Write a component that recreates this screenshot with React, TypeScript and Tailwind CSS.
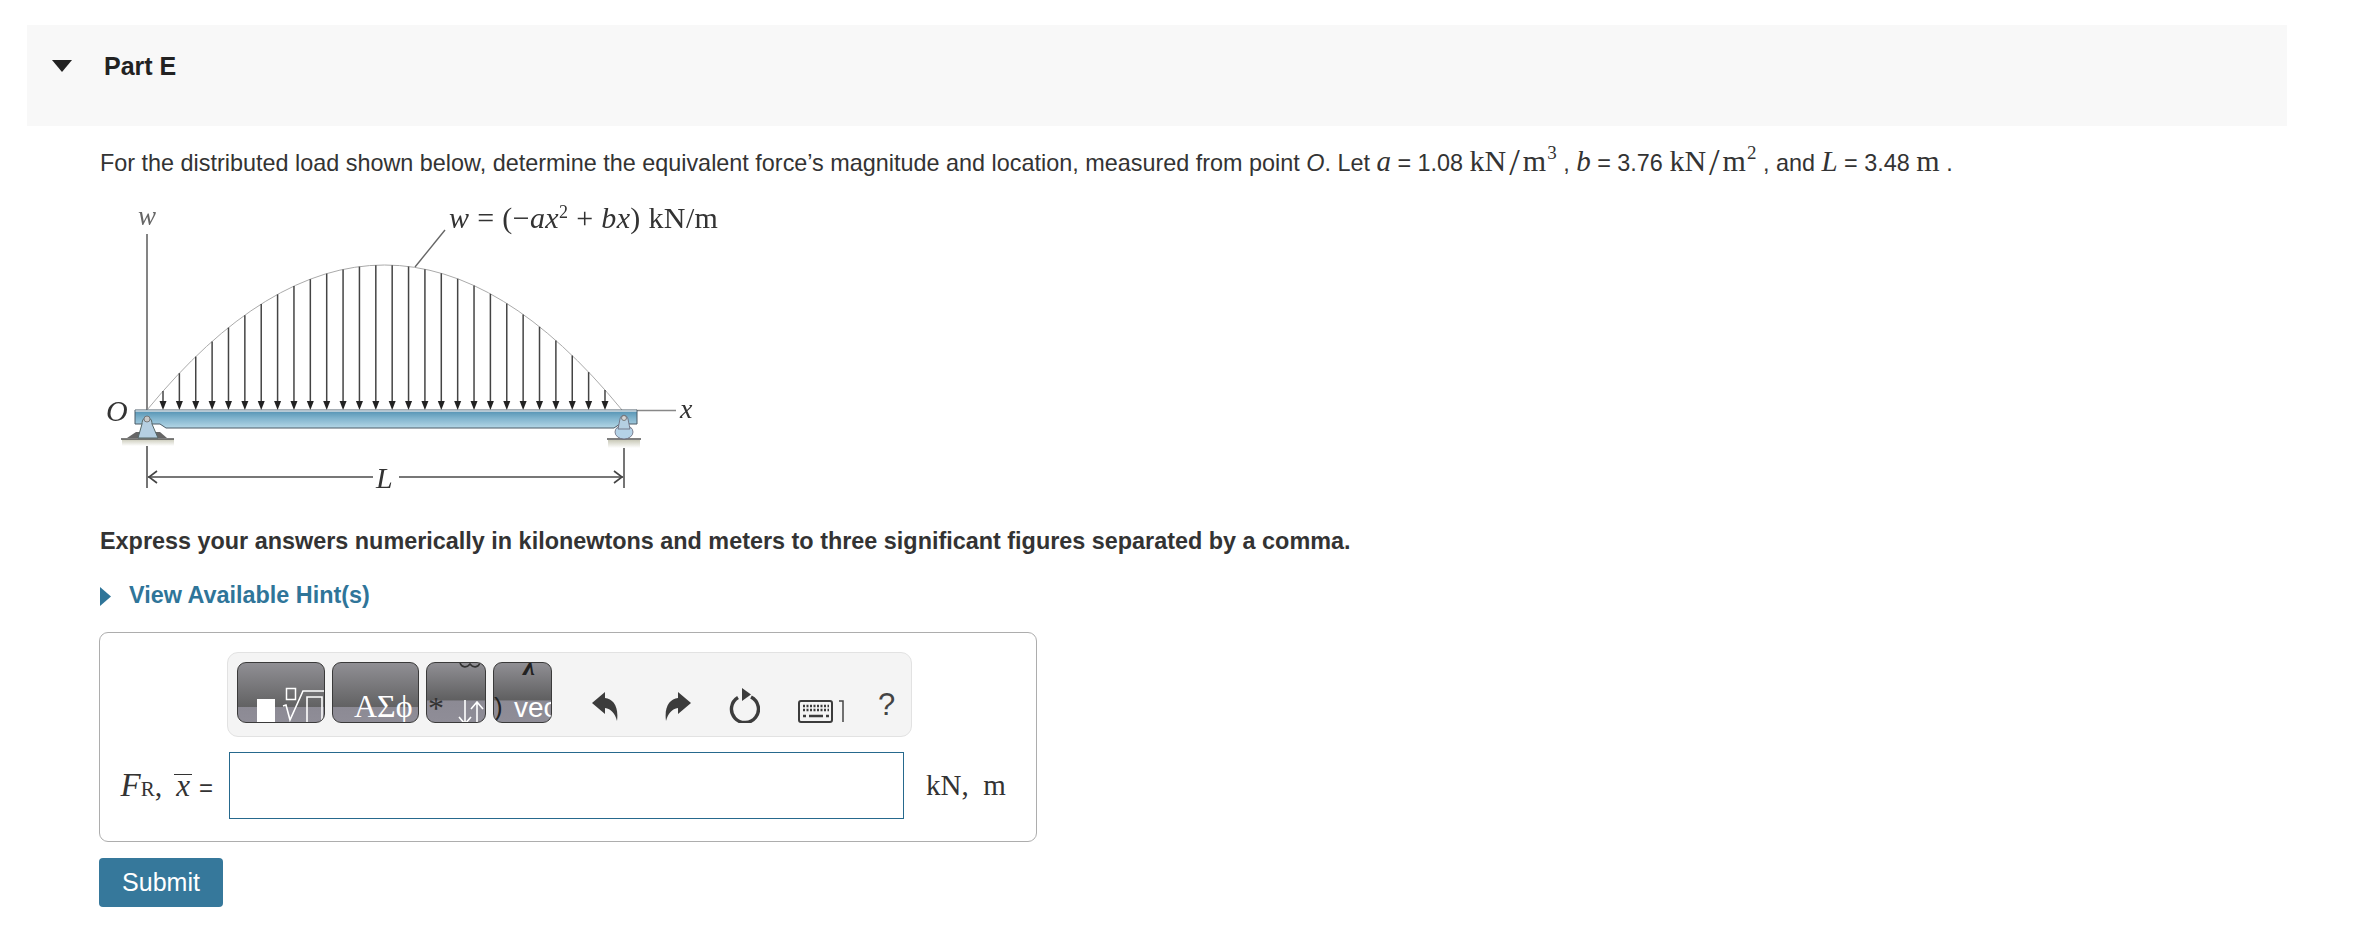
import React from "react";

const serif = "font-['Liberation_Serif',serif]";

// x positions of the load arrows, top of each one sits on the parabola
const arrows = Array.from({ length: 28 }, (_, i) => {
  const x = 163 + i * 16.37;
  const t = (x - 384.5) / 237.5;
  return { x, top: 409 - 145 * (1 - t * t) };
});

const BeamFigure = () => (
  <svg viewBox="100 190 620 310" className="block w-[620px] h-[310px] blur-[0.35px]">
    <defs>
      <linearGradient id="beam" x1="0" y1="0" x2="0" y2="1">
        <stop offset="0" stopColor="#4f8fb0" />
        <stop offset="0.45" stopColor="#7fb3cd" />
        <stop offset="1" stopColor="#b4d6e6" />
      </linearGradient>
      <linearGradient id="shade" x1="0" y1="0" x2="0" y2="1">
        <stop offset="0" stopColor="#c9c9b8" />
        <stop offset="1" stopColor="#ffffff" />
      </linearGradient>
    </defs>

    {/* axes */}
    <path d="M147 233V412" stroke="#777" strokeWidth="1.8" />
    <path d="M147 441V487" stroke="#666" strokeWidth="1.8" />
    <path d="M624 441V487" stroke="#666" strokeWidth="1.8" />
    <path d="M636 409.5H676" stroke="#888" strokeWidth="1.6" />

    {/* load curve */}
    <path d="M147 409Q384.500 119 622 409" fill="none" stroke="#aaa" strokeWidth="1" />
    <path d="M415 266L445 229" stroke="#666" strokeWidth="1.4" />

    {arrows.map((a) => (
      <g key={a.x}>
        <path d={`M${a.x} ${a.top}V402`} stroke="#444" strokeWidth="1.5" />
        <path d={`M${a.x - 3.5} 400H${a.x + 3.5}L${a.x} 409Z`} fill="#222" />
      </g>
    ))}

    {/* beam */}
    <path d="M135 409H637V423H620L614 427H166L160 423H135Z" fill="url(#beam)" stroke="#4a5b66" strokeWidth="1" />
    <path d="M135.500 410H636.500" stroke="#d5dde2" strokeWidth="1.6" />

    {/* left support */}
    <rect x="122" y="438" width="52" height="7" fill="url(#shade)" />
    <path d="M121 438H174" stroke="#555" strokeWidth="1.4" />
    <path d="M127 437L136 431H160L167 437Z" fill="#666" />
    <path d="M138 437L142 423C142 414 152 414 152 423L158 437Z" fill="#b5cfe2" stroke="#566" strokeWidth="1" />
    <circle cx="147" cy="418" r="3" fill="#c8c8c8" stroke="#666" strokeWidth="0.8" />

    {/* right support */}
    <rect x="608" y="439" width="32" height="8" fill="url(#shade)" />
    <path d="M607 438H641" stroke="#555" strokeWidth="1.4" />
    <ellipse cx="624" cy="431" rx="9" ry="7" fill="#b5d3e8" stroke="#667" strokeWidth="0.8" />
    <path d="M618 428L620 418C621 413 627 413 628 418L630 428Z" fill="#b5cfe2" stroke="#667" strokeWidth="0.8" />
    <circle cx="624" cy="417" r="2.500" fill="#d5d5d5" stroke="#666" strokeWidth="0.8" />

    {/* dimension line */}
    <path d="M148 476H373M399 476H623" stroke="#777" strokeWidth="1.8" />
    <path d="M157 470L149 476L157 482" fill="none" stroke="#444" strokeWidth="1.6" />
    <path d="M614 470L622 476L614 482" fill="none" stroke="#444" strokeWidth="1.6" />

    {/* labels */}
    <g className={serif} fill="#333">
      <text x="138" y="224" fontSize="27" fontStyle="italic" fill="#666">w</text>
      <text x="106" y="420" fontSize="30" fontStyle="italic">O</text>
      <text x="376" y="487" fontSize="30" fontStyle="italic">L</text>
      <text x="680" y="417" fontSize="28" fontStyle="italic">x</text>
      <text x="449" y="227" fontSize="30" fill="#333" letterSpacing="0.35">
        <tspan fontStyle="italic">w</tspan> = (−<tspan fontStyle="italic">ax</tspan>
        <tspan fontSize="18" dy="-10">2</tspan>
        <tspan dy="10"> + </tspan>
        <tspan fontStyle="italic">bx</tspan>) kN/m
      </text>
    </g>
  </svg>
);

const BlackCaret = () => (
  <svg viewBox="0 0 20 12" className="w-5 h-3 shrink-0">
    <path d="M0 0H20L10 12Z" fill="#222" />
  </svg>
);

const UnitFrac = ({ exp }: { exp: string }) => (
  <span className={`${serif} whitespace-nowrap text-[30px] leading-none`}>
    kN<span className="mx-[3px] text-[38px] font-light leading-none align-[-4px]">/</span>m
    <span className="ml-[1px] text-[19px] leading-none align-[12px]">{exp}</span>
  </span>
);

const MathVar = ({ children }: { children: React.ReactNode }) => (
  <span className={`${serif} italic text-[29px] leading-none`}>{children}</span>
);

const GrayButton = ({ className, children }: { className: string; children: React.ReactNode }) => (
  <div className={`relative h-[61px] shrink-0 overflow-hidden rounded-[9px] border border-[#3a3a3a] ${className}`}>
    {children}
  </div>
);

const Toolbar = () => (
  <div className="ml-[127px] mt-[19px] flex h-[85px] w-[685px] items-start rounded-[11px] border border-[#e2e2e2] bg-[#f4f4f4] pl-[9px] pt-[9px]">
    <div className="flex gap-[7px]">
      <GrayButton className="w-[88px] bg-[linear-gradient(#908f94_0%,#626263_74%,#8c8a94_75%,#8f8d97_100%)]">
        <div className="absolute left-[19px] top-[36px] h-[25px] w-[18px] bg-white" />
        <svg viewBox="0 0 44 36" className="absolute left-[44px] top-[24px] h-[36px] w-[44px]">
          <rect x="4.500" y="1.500" width="9" height="11" fill="none" stroke="#fff" strokeWidth="1.5" />
          <path d="M1 19L4 18L8 33L21 4H44" fill="none" stroke="#fff" strokeWidth="1.6" />
          <path d="M25 36V10H40V36" fill="none" stroke="#fff" strokeWidth="1.6" />
        </svg>
      </GrayButton>
      <GrayButton className="w-[87px] bg-[linear-gradient(#908f94_0%,#626263_74%,#8c8a94_75%,#8f8d97_100%)]">
        <span className={`absolute left-[21px] top-[27px] whitespace-nowrap text-[32px] leading-none text-white ${serif}`}>
          ΑΣϕ
        </span>
      </GrayButton>
      <GrayButton className="w-[60px] bg-[linear-gradient(#908f94_0%,#5f5f60_63%,#8c8a94_64%,#8f8d97_100%)]">
        <svg viewBox="0 0 22 6" className="absolute left-[32px] top-0 h-[6px] w-[22px]">
          <path d="M1 0C3 5 8 5 11 1C14 5 19 5 21 0" fill="none" stroke="#333" strokeWidth="1.6" />
        </svg>
        <span className={`absolute left-[1px] top-[29px] text-[32px] leading-none text-[#333] ${serif}`}>*</span>
        <svg viewBox="0 0 26 25" className="absolute left-[31px] top-[37px] h-[25px] w-[26px]">
          <path d="M7 0V24M1 17L7 24L13 17M19 25V2M13 9L19 2L25 9" fill="none" stroke="#fff" strokeWidth="1.6" />
        </svg>
      </GrayButton>
      <GrayButton className="w-[59px] bg-[linear-gradient(#908f94_0%,#5f5f60_63%,#8c8a94_64%,#8f8d97_100%)]">
        <span className={`absolute left-[29px] top-[-10px] text-[27px] font-bold italic leading-none text-[#222] ${serif}`}>λ</span>
        <span className="absolute left-0 top-[31px] text-[26px] leading-none text-[#222]">)</span>
        <span className="absolute left-[20px] top-[31px] text-[28px] leading-none text-white">vec</span>
      </GrayButton>
    </div>

    <svg viewBox="0 0 26 29" className="ml-[40px] mt-[30px] h-[29px] w-[26px]">
      <path d="M0 11L13 0V6C21 7 27 14 25 29C23 21 19 17 13 16V22Z" fill="#3c3c3c" />
    </svg>
    <svg viewBox="0 0 26 29" className="ml-[47px] mt-[30px] h-[29px] w-[26px]">
      <path d="M26 11L13 0V6C5 7 -1 14 1 29C3 21 7 17 13 16V22Z" fill="#3c3c3c" />
    </svg>
    <svg viewBox="0 0 32 35" className="ml-[37px] mt-[26px] h-[35px] w-[32px]">
      <path d="M10 9.500A13.500 13.500 0 1 0 23 9" fill="none" stroke="#3c3c3c" strokeWidth="3.400" />
      <path d="M14 0L23 6.500L14 13Z" fill="#3c3c3c" />
    </svg>
    <svg viewBox="0 0 36 23" className="ml-[38px] mt-[38px] h-[23px] w-[36px]">
      <rect x="1" y="1" width="33" height="21" rx="2" fill="none" stroke="#3c3c3c" strokeWidth="2" />
      <path d="M5 6H31M5 10H31" stroke="#3c3c3c" strokeWidth="2.500" strokeDasharray="2 1.500" />
      <path d="M5 16H8M11 16H25M28 16H31" stroke="#3c3c3c" strokeWidth="2.500" />
    </svg>
    <svg viewBox="0 0 6 22" className="ml-[5px] mt-[38px] h-[22px] w-[6px]">
      <path d="M0 1H4V22" fill="none" stroke="#444" strokeWidth="1.5" />
    </svg>
    <span className="ml-[33px] mt-[27px] text-[31px] leading-none text-[#444]">?</span>
  </div>
);

const App = () => {
  return (
    <div className="min-h-[934px] bg-white pt-[25px] font-['Liberation_Sans',sans-serif] text-[23.4px] text-[#333]">
      <div className="ml-[27px] flex h-[101px] w-[2260px] items-start gap-[32px] bg-[#f8f8f8] pl-[25px] pt-[35px]">
        <div className="pt-0">
          <BlackCaret />
        </div>
        <span className="text-[25px] font-bold leading-[12px] text-[#222]">Part E</span>
      </div>

      <div className="ml-[100px]">
        <p className="mt-[17px] h-[32px] whitespace-nowrap leading-[32px]">
          For the distributed load shown below, determine the equivalent force’s magnitude and location, measured from
          point <em>O</em>. Let <MathVar>a</MathVar> = 1.08 <UnitFrac exp="3" /> , <MathVar>b</MathVar> = 3.76{" "}
          <UnitFrac exp="2" /> , and <MathVar>L</MathVar> = 3.48 <span className={`${serif} text-[30px] leading-none`}>m</span> .
        </p>

        <div className="mt-[16px]">
          <BeamFigure />
        </div>

        <p className="mt-[24px] font-bold leading-[32px]">
          Express your answers numerically in kilonewtons and meters to three significant figures separated by a comma.
        </p>

        <div className="mt-[23px] flex h-[32px] items-center gap-[18px] font-bold text-[#2f7599]">
          <svg viewBox="0 0 11 19" className="h-[19px] w-[11px]">
            <path d="M0 0L11 9.500L0 19Z" fill="#2f7599" />
          </svg>
          <span>View Available Hint(s)</span>
        </div>

        <div className="ml-[-1px] mt-[20px] h-[210px] w-[938px] rounded-[9px] border border-[#adadad]">
          <Toolbar />
          <div className="mt-[15px] flex items-center">
            <div className={`flex w-[129px] items-baseline justify-end pr-[16px] ${serif} text-[30px] leading-none whitespace-nowrap`}>
              <span className="text-[33px] italic">F</span>
              <span className="text-[21px]">R</span>
              <span>,</span>
              <span className="ml-[12px] inline-block border-t-[1.5px] border-[#333] px-[2px] text-[31px] italic leading-[21px]">x</span>
              <span className="ml-[7px] font-['Liberation_Sans',sans-serif] text-[24px]">=</span>
            </div>
            <div className="h-[67px] w-[675px] border border-[#26698d] bg-white" />
            <span className={`ml-[22px] whitespace-nowrap text-[29px] leading-none ${serif}`}>kN,&nbsp;&nbsp;m</span>
          </div>
        </div>

        <button className="ml-[-1px] mt-[16px] block h-[49px] w-[124px] rounded-[4px] bg-[#36789b] text-[25px] text-white">
          Submit
        </button>
      </div>
    </div>
  );
};

export default App;
